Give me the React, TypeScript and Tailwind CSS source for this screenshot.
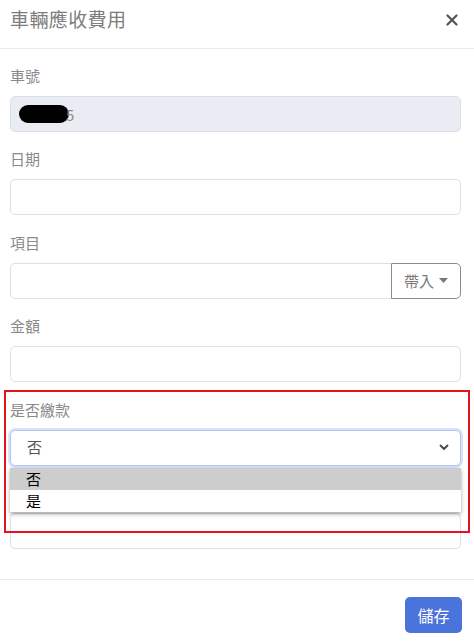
import React from "react";

const FONT = "font-['Noto_Sans_CJK_TC','Noto_Sans',sans-serif]";

function Label({ children }: { children?: React.ReactNode }) {
  return (
    <div className="h-[21px] mb-[10px] text-[15px] leading-[21px] text-[#8a8a8a]">
      {children}
    </div>
  );
}

function Field({ label, children }: { label?: string; children: React.ReactNode }) {
  return (
    <div className="mb-[16.4px]">
      <Label>{label}</Label>
      {children}
    </div>
  );
}

const inputCls =
  "h-[36px] w-full rounded-[5px] border border-[#dcdfe6] bg-white";

export default function App() {
  return (
    <div className={`relative w-[474px] h-[641px] overflow-hidden bg-white ${FONT}`}>
      {/* header */}
      <div className="h-[49px] flex items-start justify-between pl-[10px] pr-[16px] pt-[6px] border-b border-[#e9ecef]">
        <h2 className="text-[19px] leading-[26px] font-normal text-[#7d7d7d] tracking-[0.4px]">
          車輛應收費用
        </h2>
        <svg width="12" height="12" viewBox="0 0 12 12" className="mt-[8px]">
          <path d="M1.5 1.5 L10.5 10.5 M10.5 1.5 L1.5 10.5" stroke="#555" strokeWidth="2.2" strokeLinecap="round" />
        </svg>
      </div>

      {/* body */}
      <div className="pl-[10px] pr-[13px] pt-[16px] pb-[14px]">
        <Field label="車號">
          <div className="h-[36px] w-full rounded-[5px] border border-[#dcdfe6] bg-[#e9ecf3] flex items-center pl-[8px]">
            <span className="w-[50px] h-[18px] rounded-full bg-black" />
            <span className="-ml-[3px] text-[15px] text-[#8a8a8a] leading-none">5</span>
          </div>
        </Field>
        <Field label="日期">
          <div className={inputCls} />
        </Field>
        <Field label="項目">
          <div className="flex h-[36px]">
            <div className="flex-1 rounded-l-[5px] border border-r-0 border-[#dcdfe6] bg-white" />
            <div className="w-[70px] rounded-r-[5px] border border-[#8c8c8c] bg-white flex items-center justify-center gap-[5px] text-[15px] text-[#7a7a7a]">
              帶入
              <svg width="9" height="6" viewBox="0 0 9 6">
                <path d="M0 0 H9 L4.5 5 Z" fill="#777" />
              </svg>
            </div>
          </div>
        </Field>
        <Field label="金額">
          <div className={inputCls} />
        </Field>
        <Field label="是否繳款">
          <div className="h-[36px] w-full rounded-[5px] border border-[#b4c4f0] shadow-[0_0_0_2px_rgba(170,190,240,0.45)] bg-white flex items-center justify-between pl-[16px] pr-[11px] text-[15px] text-[#555]">
            否
            <svg width="10" height="7" viewBox="0 0 10 7">
              <path d="M1.5 1.5 L5 5 L8.5 1.5" stroke="#444" strokeWidth="1.8" fill="none" strokeLinecap="round" />
            </svg>
          </div>
        </Field>
        {/* label of this field is covered by the open list */}
        <Field>
          <div className={inputCls} />
        </Field>
      </div>

      {/* footer */}
      <div className="border-t border-[#e9ecef] flex justify-end pr-[12px] pt-[17px]">
        <button className="h-[36px] w-[57px] rounded-[5px] bg-[#4a73db] text-white text-[16px]">
          儲存
        </button>
      </div>

      {/* open select list */}
      <div className="absolute left-[10px] top-[468px] w-[451px] bg-white shadow-[0_2px_4px_rgba(0,0,0,0.35)] text-[15px] text-black leading-[22px]">
        <div className="h-[22px] bg-[#cdcdcd] pl-[16px]">否</div>
        <div className="h-[22px] pl-[16px]">是</div>
      </div>

      {/* annotation box */}
      <div className="absolute left-[4px] top-[390px] w-[466px] h-[143px] border-2 border-[#e3121c]" />
    </div>
  );
}
